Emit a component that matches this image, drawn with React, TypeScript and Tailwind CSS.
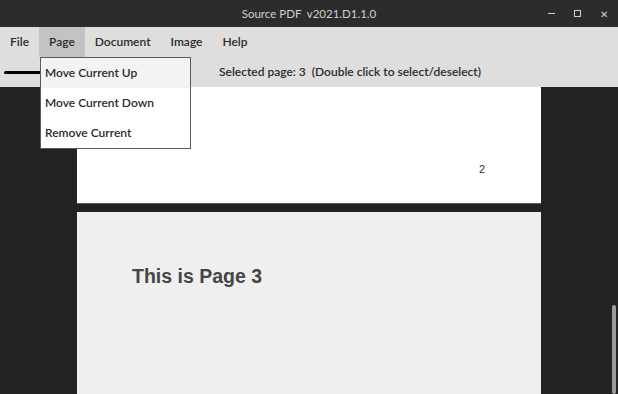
import React from "react";

const menus = ["File", "Page", "Document", "Image", "Help"];
const pageItems = ["Move Current Up", "Move Current Down", "Remove Current"];

export default function App() {
  return (
    <div
      className="relative w-[618px] h-[394px] flex flex-col overflow-hidden bg-[#222222]"
      style={{ fontFamily: 'Lato, "Noto Sans", sans-serif' }}
    >
      {/* title bar */}
      <div className="relative h-[27px] bg-[#2c2c2c] flex items-center justify-center text-[11.5px] text-[#cfcfcf]">
        <span>Source PDF&nbsp; v2021.D1.1.0</span>
        <div className="absolute right-0 top-0 h-full flex items-center text-[#d0d0d0]">
          <span className="w-[7px] h-[1px] bg-[#d0d0d0] mr-[19px]" />
          <span className="w-[7px] h-[7px] border border-[#d0d0d0] mr-[19px]" />
          <span className="text-[10px] leading-none mr-[10px]">✕</span>
        </div>
      </div>

      {/* menu bar */}
      <div className="h-[30px] bg-[#dedede] flex items-stretch text-[12px] font-semibold text-[#2b2b2b]">
        {menus.map((m) => (
          <div
            key={m}
            className={
              m === "Page"
                ? "flex items-center px-[10px] bg-[#c3c3c3]"
                : "flex items-center px-[10px]"
            }
          >
            {m}
          </div>
        ))}
      </div>

      {/* toolbar */}
      <div className="h-[30px] bg-[#dedede] flex items-center text-[12px] font-semibold text-[#2b2b2b]">
        <div className="ml-[4px] w-[40px] h-[3px] bg-black rounded-full" />
        <div className="ml-[175px]">Selected page: 3&nbsp; (Double click to select/deselect)</div>
      </div>

      {/* page view */}
      <div className="flex-1 flex flex-col items-center gap-[8px]">
        <div className="w-[464px] h-[117px] shrink-0 bg-white border-b border-[#5a5a5a] flex items-end justify-end pr-[56px] pb-[26px]">
          <span className="text-[11px] text-[#333]" style={{ fontFamily: '"Liberation Sans", Arial, sans-serif' }}>
            2
          </span>
        </div>
        <div className="w-[464px] flex-1 bg-[#efefef] pl-[55px] pt-[55px]">
          <div
            className="text-[19.5px] font-bold text-[#454545] leading-none"
            style={{ fontFamily: '"Liberation Sans", Arial, sans-serif' }}
          >
            This is Page 3
          </div>
        </div>
      </div>

      {/* scrollbar */}
      <div className="absolute right-[2px] top-[305px] bottom-0 w-[4px] rounded-full bg-[#9a9a9a]" />

      {/* dropdown */}
      <div className="absolute left-[40px] top-[57px] w-[151px] bg-white border border-[#5a5a5a] text-[12px] font-semibold text-[#2b2b2b]">
        {pageItems.map((it, i) => (
          <div
            key={it}
            className={
              i === 0
                ? "h-[30px] flex items-center pl-[4px] bg-[#f3f3f3]"
                : "h-[30px] flex items-center pl-[4px]"
            }
          >
            {it}
          </div>
        ))}
      </div>
    </div>
  );
}
